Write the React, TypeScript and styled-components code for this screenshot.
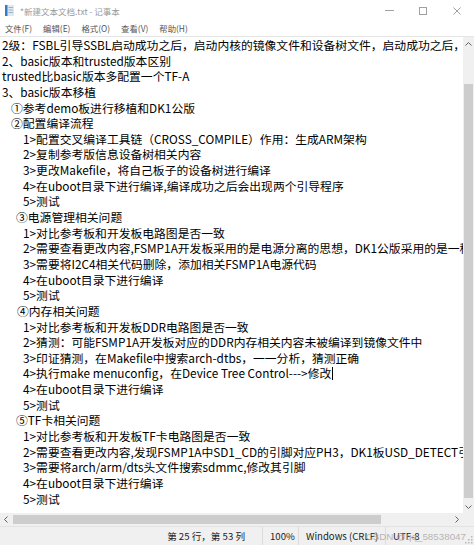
import styled, { createGlobalStyle } from 'styled-components';

const GlobalStyle = createGlobalStyle`
  html, body {
    margin: 0;
    padding: 0;
    background: #ffffff;
  }
  body {
    font-family: 'Noto Sans CJK SC', 'Noto Sans', sans-serif;
  }
`;

const Window = styled.div`
  width: 474px;
  height: 545px;
  display: flex;
  flex-direction: column;
  background: #ffffff;
  overflow: hidden;
  position: relative;
`;

const TitleBar = styled.div`
  height: 21px;
  display: flex;
  align-items: center;
  padding-left: 5px;
  gap: 6px;
`;

const Title = styled.span`
  font-size: 8.5px;
  color: #9a9a9a;
  flex: 1;
  white-space: nowrap;
`;

const Controls = styled.div`
  display: flex;
  align-items: center;
  height: 100%;
`;

const ControlBtn = styled.div`
  width: 34px;
  height: 100%;
  display: flex;
  align-items: center;
  justify-content: center;
`;

const MenuBar = styled.div`
  height: 15px;
  display: flex;
  align-items: center;
  gap: 11px;
  padding-left: 5px;
`;

const MenuItem = styled.span`
  font-size: 8.4px;
  color: #555555;
  line-height: 15px;
`;

const EditorRow = styled.div`
  flex: 1;
  display: flex;
  border-top: 1px solid #e6e6e6;
  min-height: 0;
`;

const Editor = styled.div`
  flex: 1;
  overflow: hidden;
`;

const Line = styled.div<{ $indent: number }>`
  font-size: 11.8px;
  line-height: 15.65px;
  height: 15.65px;
  color: #000000;
  white-space: nowrap;
  padding-left: ${(p) => p.$indent}px;
`;

const Caret = styled.span`
  display: inline-block;
  width: 1px;
  height: 13px;
  margin-left: 1px;
  background: #000;
  vertical-align: -2px;
`;

const VScroll = styled.div`
  width: 11px;
  display: flex;
  flex-direction: column;
  background: #f0f0f0;
`;

const Arrow = styled.div<{ $size?: number }>`
  height: ${(p) => p.$size ?? 13}px;
  width: ${(p) => p.$size ?? 11}px;
  display: flex;
  align-items: center;
  justify-content: center;
  flex-shrink: 0;
`;

const VThumb = styled.div`
  flex: 1;
  margin: 34px 1px 2px;
  background: #cdcdcd;
`;

const HScrollRow = styled.div`
  height: 13px;
  display: flex;
  background: #f0f0f0;
`;

const HThumb = styled.div`
  width: 368px;
  margin: 2px 0 2px 1px;
  background: #cdcdcd;
`;

const Spacer = styled.div`
  flex: 1;
`;

const Corner = styled.div`
  width: 11px;
  background: #f0f0f0;
`;

const StatusBar = styled.div`
  height: 18px;
  display: flex;
  align-items: center;
  background: #f0f0f0;
  border-top: 1px solid #e3e3e3;
  font-size: 9.6px;
  color: #222222;
`;

const StatusField = styled.div<{ $width: number; $first?: boolean }>`
  width: ${(p) => p.$width}px;
  height: 100%;
  display: flex;
  align-items: center;
  justify-content: ${(p) => (p.$first ? 'flex-end' : 'flex-start')};
  padding: ${(p) => (p.$first ? '0 17px 0 0' : '0 0 0 7px')};
  box-sizing: border-box;
  white-space: nowrap;
  border-left: ${(p) => (p.$first ? 'none' : '1px solid #dcdcdc')};
`;

const Watermark = styled.div`
  position: absolute;
  right: 8px;
  bottom: 3px;
  font-family: 'Liberation Sans', Arial, sans-serif;
  font-size: 9.8px;
  color: rgba(165, 165, 165, 0.8);
  white-space: nowrap;
  pointer-events: none;
`;

const Grip = styled.div`
  position: absolute;
  right: 1px;
  bottom: 1px;
  line-height: 0;
`;

const lines: [number, string, boolean?][] = [
  [2, '2级：FSBL引导SSBL启动成功之后，启动内核的镜像文件和设备树文件，启动成功之后，进入'],
  [2, '2、basic版本和trusted版本区别'],
  [2, 'trusted比basic版本多配置一个TF-A'],
  [2, '3、basic版本移植'],
  [11, '①参考demo板进行移植和DK1公版'],
  [11, '②配置编译流程'],
  [23, '1>配置交叉编译工具链（CROSS_COMPILE）作用：生成ARM架构'],
  [23, '2>复制参考版信息设备树相关内容'],
  [23, '3>更改Makefile，将自己板子的设备树进行编译'],
  [23, '4>在uboot目录下进行编译,编译成功之后会出现两个引导程序'],
  [23, '5>测试'],
  [16, '③电源管理相关问题'],
  [23, '1>对比参考板和开发板电路图是否一致'],
  [23, '2>需要查看更改内容,FSMP1A开发板采用的是电源分离的思想，DK1公版采用的是一种'],
  [23, '3>需要将I2C4相关代码删除，添加相关FSMP1A电源代码'],
  [23, '4>在uboot目录下进行编译'],
  [23, '5>测试'],
  [17, '④内存相关问题'],
  [23, '1>对比参考板和开发板DDR电路图是否一致'],
  [23, '2>猜测：可能FSMP1A开发板对应的DDR内存相关内容未被编译到镜像文件中'],
  [23, '3>印证猜测，在Makefile中搜索arch-dtbs，一一分析，猜测正确'],
  [23, '4>执行make menuconfig，在Device Tree Control--->修改', true],
  [23, '4>在uboot目录下进行编译'],
  [23, '5>测试'],
  [16, '⑤TF卡相关问题'],
  [23, '1>对比参考板和开发板TF卡电路图是否一致'],
  [23, '2>需要查看更改内容,发现FSMP1A中SD1_CD的引脚对应PH3，DK1板USD_DETECT引脚'],
  [23, '3>需要将arch/arm/dts头文件搜索sdmmc,修改其引脚'],
  [23, '4>在uboot目录下进行编译'],
  [23, '5>测试'],
];

const menus = ['文件(F)', '编辑(E)', '格式(O)', '查看(V)', '帮助(H)'];

function NotepadIcon() {
  return (
    <svg width="9" height="11" viewBox="0 0 9 11">
      <rect x="0" y="0" width="9" height="11" fill="#dfe8f0" />
      <rect x="0" y="0" width="2.5" height="11" fill="#2f7fc6" />
      <rect x="3.5" y="2" width="4.5" height="1" fill="#9bb3c8" />
      <rect x="3.5" y="4.5" width="4.5" height="1" fill="#9bb3c8" />
      <rect x="3.5" y="7" width="4.5" height="1" fill="#9bb3c8" />
    </svg>
  );
}

export default function App() {
  return (
    <>
      <GlobalStyle />
      <Window>
        <TitleBar>
          <NotepadIcon />
          <Title>*新建文本文档.txt - 记事本</Title>
          <Controls>
            <ControlBtn>
              <svg width="9" height="9" viewBox="0 0 9 9">
                <line x1="0" y1="4.5" x2="9" y2="4.5" stroke="#a0a0a0" strokeWidth="1" />
              </svg>
            </ControlBtn>
            <ControlBtn>
              <svg width="8" height="8" viewBox="0 0 8 8">
                <rect x="0.5" y="0.5" width="7" height="7" fill="none" stroke="#a0a0a0" strokeWidth="1" />
              </svg>
            </ControlBtn>
            <ControlBtn>
              <svg width="8" height="8" viewBox="0 0 8 8">
                <path d="M0.5 0.5 L7.5 7.5 M7.5 0.5 L0.5 7.5" stroke="#a0a0a0" strokeWidth="1" />
              </svg>
            </ControlBtn>
          </Controls>
        </TitleBar>
        <MenuBar>
          {menus.map((m) => (
            <MenuItem key={m}>{m}</MenuItem>
          ))}
        </MenuBar>
        <EditorRow>
          <Editor>
            {lines.map(([indent, text, caret], i) => (
              <Line key={i} $indent={indent}>
                {text}
                {caret && <Caret />}
              </Line>
            ))}
          </Editor>
          <VScroll>
            <Arrow>
              <svg width="7" height="4" viewBox="0 0 7 4">
                <path d="M0.5 3.5 L3.5 0.5 L6.5 3.5" fill="none" stroke="#606060" strokeWidth="1" />
              </svg>
            </Arrow>
            <VThumb />
            <Arrow>
              <svg width="7" height="4" viewBox="0 0 7 4">
                <path d="M0.5 0.5 L3.5 3.5 L6.5 0.5" fill="none" stroke="#606060" strokeWidth="1" />
              </svg>
            </Arrow>
          </VScroll>
        </EditorRow>
        <HScrollRow>
          <Arrow $size={12}>
            <svg width="4" height="7" viewBox="0 0 4 7">
              <path d="M3.5 0.5 L0.5 3.5 L3.5 6.5" fill="none" stroke="#606060" strokeWidth="1" />
            </svg>
          </Arrow>
          <HThumb />
          <Spacer />
          <Arrow $size={12}>
            <svg width="4" height="7" viewBox="0 0 4 7">
              <path d="M0.5 0.5 L3.5 3.5 L0.5 6.5" fill="none" stroke="#606060" strokeWidth="1" />
            </svg>
          </Arrow>
          <Corner />
        </HScrollRow>
        <StatusBar>
          <StatusField $width={262} $first>
            第 25 行，第 53 列
          </StatusField>
          <StatusField $width={36}>100%</StatusField>
          <StatusField $width={87}>Windows (CRLF)</StatusField>
          <StatusField $width={89}>UTF-8</StatusField>
        </StatusBar>
        <Watermark>CSDN @qq_58538047</Watermark>
        <Grip>
          <svg width="10" height="10" viewBox="0 0 10 10">
            <g fill="#b8b8b8">
              <rect x="8" y="2" width="1.5" height="1.5" />
              <rect x="5" y="5" width="1.5" height="1.5" />
              <rect x="8" y="5" width="1.5" height="1.5" />
              <rect x="2" y="8" width="1.5" height="1.5" />
              <rect x="5" y="8" width="1.5" height="1.5" />
              <rect x="8" y="8" width="1.5" height="1.5" />
            </g>
          </svg>
        </Grip>
      </Window>
    </>
  );
}
